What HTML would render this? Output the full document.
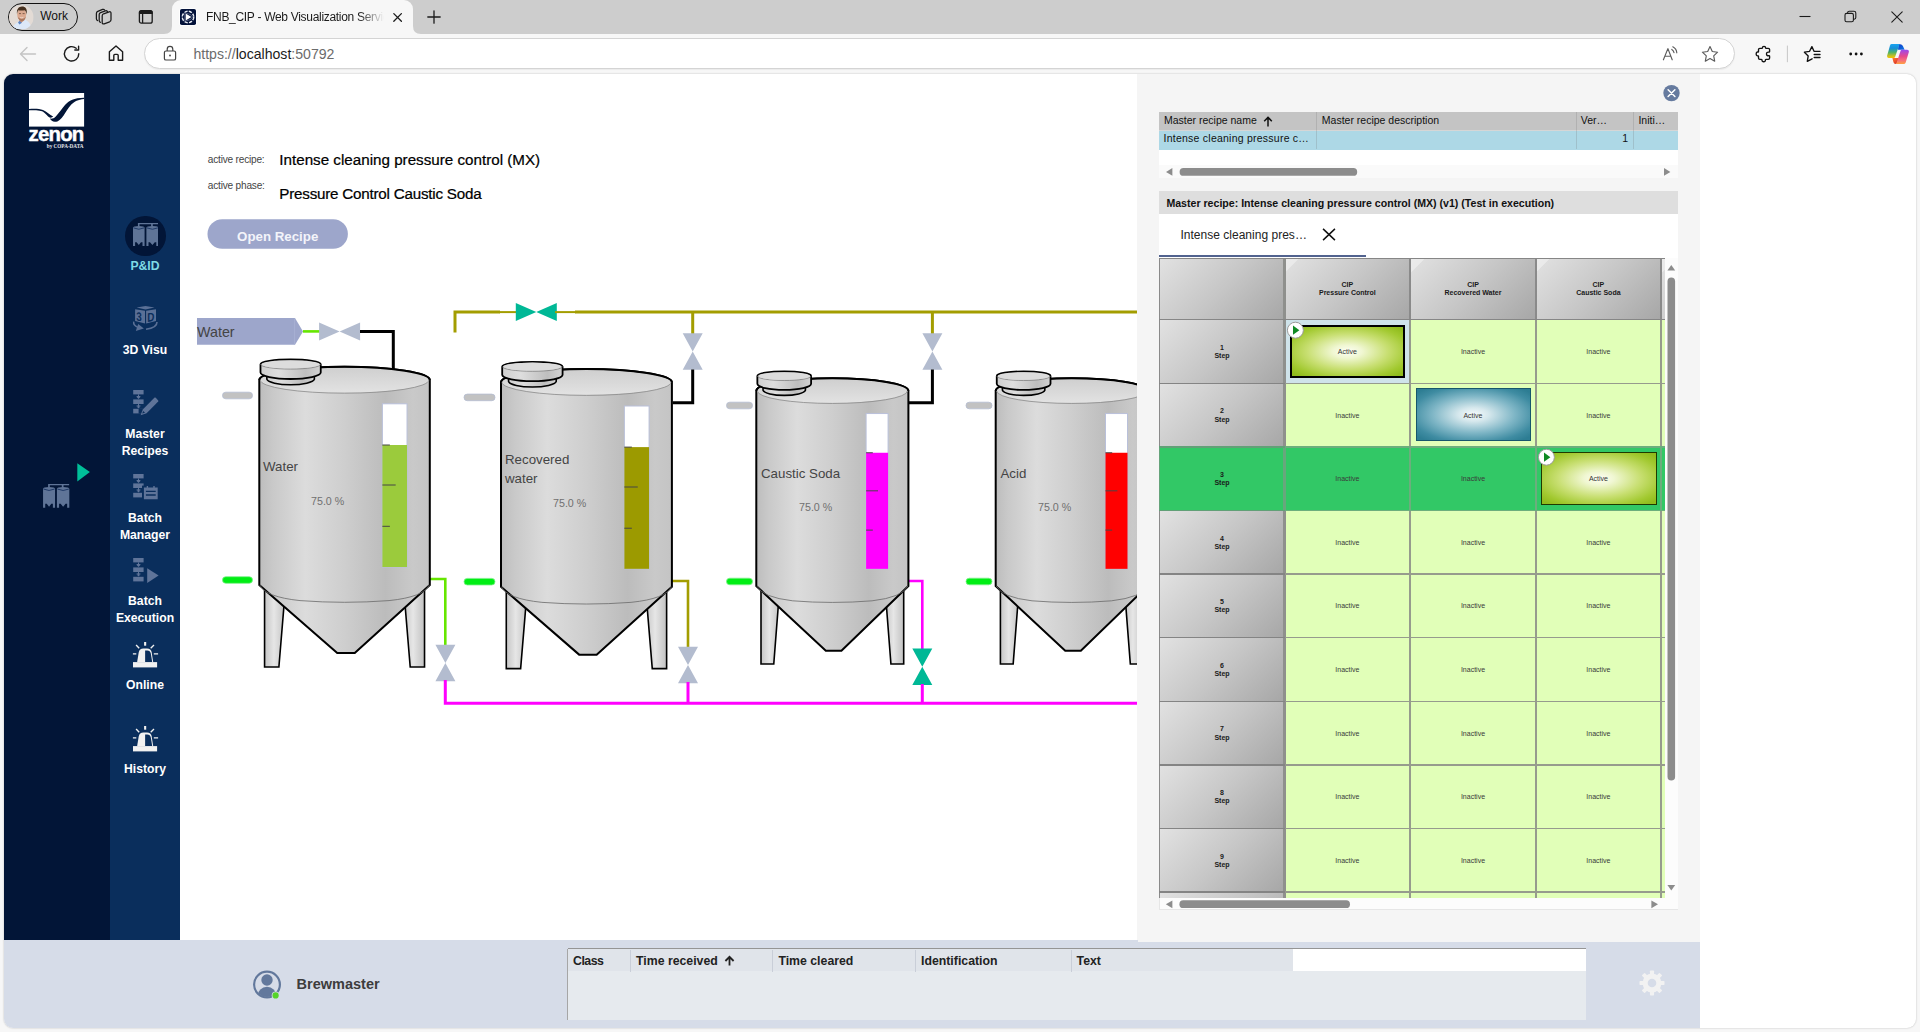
<!DOCTYPE html>
<html lang="en">
<head>
<meta charset="utf-8">
<title>FNB_CIP - Web Visualization Service</title>
<style>
html,body{margin:0;padding:0}
body{width:1920px;height:1032px;position:relative;overflow:hidden;background:#f7f7f7;font-family:"Liberation Sans",sans-serif;color:#1b1b1b}
.abs{position:absolute}
.t{position:absolute;white-space:nowrap;line-height:1}
#tabbar{position:absolute;left:0;top:0;width:1920px;height:34px;background:#cdcdcd}
#toolbar{position:absolute;left:0;top:34px;width:1920px;height:40px;background:#f7f7f7}
#page{position:absolute;left:4px;top:74px;width:1912px;height:954px;border-radius:9px;overflow:hidden;background:#fff;box-shadow:0 0 2px rgba(0,0,0,.25)}
#pg{position:absolute;left:-4px;top:-74px;width:1920px;height:1032px}
.nav{position:absolute;left:110px;width:70px;text-align:center;color:#fff;font-weight:bold;font-size:12.2px;line-height:17.3px}
.gl{position:absolute;background:#8d8d8d}
.hc{position:absolute;background:linear-gradient(135deg,#e2e2e2 0%,#c6c6c6 50%,#a6a6a6 100%)}
.ht{position:absolute;text-align:center;font-size:7px;font-weight:bold;line-height:8.2px;color:#1a1a1a;white-space:nowrap}
.ic{position:absolute;text-align:center;font-size:7px;color:#3a3a3a;white-space:nowrap;line-height:8px}
</style>
</head>
<body>
<div id="tabbar">
  <!-- profile pill -->
  <div class="abs" style="left:8px;top:2.9px;width:70px;height:27.7px;border:1.6px solid #111;border-radius:15px;box-sizing:border-box"></div>
  <svg class="abs" style="left:9.2px;top:4.8px" width="24.6" height="24.6" viewBox="0 0 24.6 24.6">
    <defs><clipPath id="avc"><circle cx="12.3" cy="12.3" r="12.3"/></clipPath></defs>
    <g clip-path="url(#avc)">
      <rect width="24.6" height="24.6" fill="#e3dbd5"/>
      <path d="M3 24.6 C4 19.6 7.6 17.6 10.4 16.4 L15.4 14.6 C19 16 22 18.6 22.6 24.6Z" fill="#dce8f8"/>
      <path d="M9 17.4 L11.2 15 L13 17.8 L10.4 19.6Z" fill="#5f86c4"/>
      <path d="M10.6 14 L15 13 L15.6 15 L12.6 17.6 L10.2 15.6Z" fill="#c48f76"/>
      <ellipse cx="12.7" cy="9.4" rx="4.5" ry="5.9" fill="#dba98f"/>
      <path d="M8.6 11.4 C9.4 14.8 11.4 16 12.9 16 C14.6 16 16.4 14.6 16.9 11.4 C15.6 13.4 14 13.8 12.8 13.8 C11.4 13.8 9.8 13.2 8.6 11.4Z" fill="#a9775e"/>
      <path d="M8 9.2 C7.4 4 9.8 1.6 13 1.5 C16.6 1.5 18.6 4 17.6 9.4 C17.2 7 16.4 5.6 15.6 5.2 C13.6 5.8 10.6 5.6 9.4 5.2 C8.6 6 8.2 7.6 8 9.2Z" fill="#47311f"/>
      <path d="M10 8.6 h2 M13.6 8.6 h2" stroke="#5a3c2c" stroke-width="0.7"/>
      <path d="M11.2 12.4 Q12.8 13.3 14.4 12.4" stroke="#f4e6e0" stroke-width="0.7" fill="none"/>
    </g>
  </svg>
  <div class="t" style="left:40.2px;top:10.4px;font-size:12px;color:#111">Work</div>
  <!-- workspaces icon -->
  <svg class="abs" style="left:94px;top:7px" width="22" height="20" viewBox="0 0 22 20" fill="none" stroke="#1b1b1b" stroke-width="1.25" stroke-linejoin="round" stroke-linecap="round">
    <path d="M3.6 13.6 Q2.4 13.2 2.4 11.8 V6.4 Q2.4 5 3.8 4.4 L8.6 2.4 Q10 2 10.6 3"/>
    <path d="M6.4 15.4 Q5.2 15 5.2 13.6 V7.6 Q5.2 6.2 6.6 5.6 L11.4 3.8 Q12.8 3.4 13.4 4.6"/>
    <path d="M9.6 6.8 L15.2 4.8 Q17 4.4 17 6.2 V12.8 Q17 14.2 15.6 14.8 L10.2 16.8 Q8.2 17.4 8.2 15.4 V8.8 Q8.2 7.4 9.6 6.8Z"/>
  </svg>
  <!-- tab actions icon -->
  <svg class="abs" style="left:138px;top:9px" width="16" height="16" viewBox="0 0 16 16" fill="none" stroke="#1b1b1b" stroke-width="1.3">
    <rect x="1.4" y="1.6" width="12.8" height="12.6" rx="2"/>
    <path d="M1.6 4.4 H14 V3.2 Q14 1.8 12.4 1.8 H3.2 Q1.6 1.8 1.6 3.2Z" fill="#1b1b1b"/>
    <path d="M4.6 4.4 V14"/>
  </svg>
  <!-- active tab -->
  <div class="abs" style="left:172px;top:0;width:241px;height:34px;background:#f7f7f7;border-radius:9px 9px 0 0"></div>
  <svg class="abs" style="left:164px;top:26px" width="8" height="8"><path d="M8 0 V8 H0 Q8 8 8 0Z" fill="#f7f7f7"/></svg>
  <svg class="abs" style="left:413px;top:26px" width="8" height="8"><path d="M0 0 V8 H8 Q0 8 0 0Z" fill="#f7f7f7"/></svg>
  <!-- favicon -->
  <svg class="abs" style="left:179px;top:8px" width="18" height="18" viewBox="0 0 18 18">
    <rect x="0.2" y="0.2" width="17.6" height="17.6" rx="2.6" fill="#fff"/>
    <rect x="1" y="1" width="16" height="16" rx="1.8" fill="#03123a"/>
    <circle cx="9" cy="9" r="5.7" fill="none" stroke="#e8ebf2" stroke-width="1.5" stroke-dasharray="3.2 1.3"/>
    <circle cx="9" cy="9" r="4.6" fill="#03123a"/>
    <path d="M6.7 5.5 L12.4 9 L6.7 12.5Z" fill="#fff"/>
    <path d="M5.8 4.6 V13.4 M5.8 4.6 L11.6 6.6 M5.8 13.4 L11.6 11.4 M11.6 6.6 L13.6 9 L11.6 11.4" stroke="#7f8aa8" stroke-width="0.6" fill="none"/>
  </svg>
  <div class="t" style="left:206px;top:8px;height:20px;line-height:18px;font-size:12px;letter-spacing:-0.3px;color:#1b1b1b;width:178px;overflow:hidden;-webkit-mask-image:linear-gradient(90deg,#000 86%,transparent 100%)">FNB_CIP - Web Visualization Servic</div>
  <svg class="abs" style="left:392px;top:12px" width="11" height="11" viewBox="0 0 11 11" stroke="#1b1b1b" stroke-width="1.3" stroke-linecap="round"><path d="M1.8 1.6 L9.4 9.2 M9.4 1.6 L1.8 9.2"/></svg>
  <svg class="abs" style="left:427px;top:10px" width="14" height="14" viewBox="0 0 14 14" stroke="#1b1b1b" stroke-width="1.3" stroke-linecap="round"><path d="M7 0.8 V13.2 M0.8 7 H13.2"/></svg>
  <!-- window controls -->
  <svg class="abs" style="left:1799px;top:11px" width="12" height="12" viewBox="0 0 12 12" stroke="#1b1b1b" stroke-width="1.1"><path d="M0.5 5.5 H11.5"/></svg>
  <svg class="abs" style="left:1844px;top:10px" width="13" height="13" viewBox="0 0 13 13" fill="none" stroke="#1b1b1b" stroke-width="1.1"><rect x="1" y="3.4" width="8.4" height="8.4" rx="1.6"/><path d="M3.6 3.2 V2.8 Q3.6 1.2 5.2 1.2 H10 Q11.8 1.2 11.8 3 V7.6 Q11.8 9.2 10.2 9.2 H9.6"/></svg>
  <svg class="abs" style="left:1891px;top:11px" width="12" height="12" viewBox="0 0 12 12" stroke="#1b1b1b" stroke-width="1.1" stroke-linecap="round"><path d="M0.8 0.8 L11.2 11.2 M11.2 0.8 L0.8 11.2"/></svg>
</div>
<div id="toolbar">
  <!-- back (disabled) -->
  <svg class="abs" style="left:19px;top:12px" width="18" height="16" viewBox="0 0 18 16" fill="none" stroke="#c4c4c4" stroke-width="1.4" stroke-linecap="round" stroke-linejoin="round"><path d="M16.5 8 H1.5 M8 1.5 L1.5 8 L8 14.5"/></svg>
  <!-- refresh -->
  <svg class="abs" style="left:62px;top:10px" width="20" height="20" viewBox="0 0 20 20" fill="none" stroke="#1b1b1b" stroke-width="1.4" stroke-linecap="round" stroke-linejoin="round"><path d="M16.8 9.8 A7.2 7.2 0 1 1 14.2 4.3"/><path d="M16.6 2.2 V6 H12.8"/></svg>
  <!-- home -->
  <svg class="abs" style="left:107px;top:10px" width="18" height="18" viewBox="0 0 18 18" fill="none" stroke="#1b1b1b" stroke-width="1.4" stroke-linejoin="round"><path d="M2.4 16.2 V7.8 L9 2 L15.6 7.8 V16.2 H11.2 V11.4 Q11.2 10.4 10.2 10.4 H7.8 Q6.8 10.4 6.8 11.4 V16.2Z"/></svg>
  <!-- url pill -->
  <div class="abs" style="left:144px;top:4px;width:1591px;height:31.4px;border:1px solid #d4d4d4;border-radius:16px;background:#fff;box-sizing:border-box;box-shadow:0 1px 1px rgba(0,0,0,.05)"></div>
  <svg class="abs" style="left:163px;top:11px" width="14" height="16" viewBox="0 0 14 16" fill="none" stroke="#444" stroke-width="1.2"><rect x="1.4" y="6" width="11.2" height="9" rx="1.6"/><path d="M4.2 6 V4.2 A2.8 2.8 0 0 1 9.8 4.2 V6"/><circle cx="7" cy="10.5" r="0.9" fill="#444" stroke="none"/></svg>
  <div class="t" style="left:193.4px;top:13px;font-size:14.1px;color:#6b6b6b"><span>https://</span><span style="color:#1b1b1b">localhost</span><span>:50792</span></div>
  <!-- read aloud -->
  <svg class="abs" style="left:1661px;top:10px" width="20" height="20" viewBox="0 0 20 20" fill="none" stroke="#5c5c5c" stroke-width="1.15" stroke-linecap="round" stroke-linejoin="round"><path d="M2.4 15.8 L6.9 4.6 L11.2 15.8 M3.9 12.2 H9.8"/><path d="M10.8 5.4 Q12.6 6.4 13 8.6 M11.8 2.8 Q15.4 4.6 15.8 8.8"/></svg>
  <!-- star -->
  <svg class="abs" style="left:1700px;top:10px" width="20" height="20" viewBox="0 0 20 20" fill="none" stroke="#5c5c5c" stroke-width="1.15" stroke-linejoin="round"><path d="M10 2.6 L12.3 7.5 L17.6 8.2 L13.7 11.9 L14.7 17.2 L10 14.6 L5.3 17.2 L6.3 11.9 L2.4 8.2 L7.7 7.5Z"/></svg>
  <!-- extensions + favorites -->
  <svg class="abs" style="left:1748px;top:6px" width="82" height="30" viewBox="0 0 82 30" fill="none" stroke="#111" stroke-width="1.35" stroke-linejoin="round" stroke-linecap="round">
    <path d="M10.5 9.6 Q10.5 8.3 11.8 8.3 H14 Q14.6 8.3 14.5 7.7 Q14.4 6.3 16 6.3 Q17.6 6.3 17.5 7.7 Q17.4 8.3 18 8.3 H20.3 Q21.6 8.3 21.6 9.6 V11.4 Q21.6 12.2 20.8 12.1 Q18.5 11.9 18.5 13.9 Q18.5 15.9 20.8 15.7 Q21.6 15.6 21.6 16.4 V18.1 Q21.6 19.4 20.3 19.4 H18 Q17.3 19.4 17.4 20.1 Q17.5 21.7 15.7 21.7 Q13.9 21.7 14 20.1 Q14.1 19.4 13.4 19.4 H11.8 Q10.5 19.4 10.5 18.1 V16.4 Q10.5 15.7 9.8 15.8 Q8.2 15.9 8.2 13.9 Q8.2 11.9 9.8 12 Q10.5 12.1 10.5 11.4Z"/>
    <path d="M39.4 6 V21.8" stroke="#c6c6c6" stroke-width="1"/>
    <path d="M66 11.3 L63.9 6.6 L61.6 11.3 L56.4 12.2 L60.2 15.9 L59.3 21.4 L64.1 18.8 M66 11.3 H72 M66.2 14.5 H72 M66.2 17.5 H72"/>
  </svg>
  <!-- more -->
  <svg class="abs" style="left:1847px;top:18px" width="18" height="4" viewBox="0 0 18 4" fill="#111"><circle cx="3.7" cy="2" r="1.4"/><circle cx="9.1" cy="2" r="1.4"/><circle cx="14.4" cy="2" r="1.4"/></svg>
  <!-- copilot -->
  <svg class="abs" style="left:1880px;top:6px" width="32" height="32" viewBox="0 0 32 32">
    <defs>
      <linearGradient id="cp1" x1="0" y1="0" x2="0" y2="1"><stop offset="0" stop-color="#1aa4f0"/><stop offset="0.3" stop-color="#1690d8"/><stop offset="0.6" stop-color="#4fb367"/><stop offset="0.85" stop-color="#c8c020"/><stop offset="1" stop-color="#f5c400"/></linearGradient>
      <linearGradient id="cp2" x1="0" y1="0" x2="0" y2="1"><stop offset="0" stop-color="#9a48ee"/><stop offset="0.45" stop-color="#e6488e"/><stop offset="0.75" stop-color="#f7707a"/><stop offset="1" stop-color="#ffa23e"/></linearGradient>
      <linearGradient id="cp3" x1="0" y1="0" x2="1" y2="1"><stop offset="0" stop-color="#1238c6"/><stop offset="1" stop-color="#0b7ce6"/></linearGradient>
      <linearGradient id="cp4" x1="0" y1="0" x2="0.6" y2="1"><stop offset="0" stop-color="#ff7a30"/><stop offset="1" stop-color="#dc3428"/></linearGradient>
    </defs>
    <path d="M18.6 4 Q22 4 22.8 5.8 L24.6 9.8 H18 Z" fill="url(#cp3)"/>
    <path d="M12.4 18 H19 L17 23.2 Q16.6 24 15.6 24 Q13.8 23.8 13.4 22Z" fill="url(#cp4)"/>
    <path d="M11.6 4 H19.6 L15 17.2 Q14.6 18 13.6 18 H8.6 Q6.6 17.8 7.1 15.8 L10 5.4 Q10.4 4 11.6 4Z" fill="url(#cp1)"/>
    <path d="M21.6 9.8 H27 Q29.4 10 28.8 12.2 L25.7 22.4 Q25.2 24 23.6 24 H16.2 L20.6 10.8 Q20.9 9.8 21.6 9.8Z" fill="url(#cp2)"/>
  </svg>
</div>
<div id="page"><div id="pg">
<!-- sidebar -->
<div class="abs" style="left:0;top:74px;width:110px;height:866px;background:#021537"></div>
<div class="abs" style="left:109.8px;top:74px;width:70.7px;height:866px;background:#0a2e5c"></div>
<!-- logo -->
<svg class="abs" style="left:29px;top:92.8px" width="56" height="34" viewBox="0 0 56 34">
  <rect width="55.1" height="33.6" fill="#fff"/>
  <path d="M0 16 C6 15.6 10.5 15.8 14 17 C18 18.6 20.5 21.8 24.2 23.4 C22.8 24.4 21.6 24.8 20.6 24.6 C18.5 23 17 21 15 19.4 C12.5 17.6 9 17.2 0 17.3Z" fill="#021537"/>
  <path d="M20.9 25.6 C23 26 25 25.4 27 23.2 C30 20 33 15.5 36 12 C40 7.6 45 5 55.1 4.8 L55.1 5.9 C49 6.4 45.5 8.4 42.3 11.4 C39 15 37 19 34.6 22.4 C32 26 29.5 28.8 25.8 28.8 C23.6 28.8 21.8 27.2 20.9 25.6Z" fill="#021537"/>
</svg>
<div class="t" style="left:28.6px;top:123.8px;font-size:20.4px;font-weight:bold;color:#fff;letter-spacing:-0.8px;line-height:20.4px;-webkit-text-stroke:0.45px #fff">zenon</div>
<div class="t" style="left:46.8px;top:144.2px;font-size:5.2px;color:#e4e6ea;font-family:'Liberation Serif',serif;font-weight:bold">by COPA-DATA</div>
<!-- col1 items -->
<svg class="abs" style="left:77px;top:463px" width="14" height="19" viewBox="0 0 14 19"><path d="M0.3 0.3 L12.9 9 L0.3 18.6Z" fill="#00bf99"/></svg>
<svg class="abs" style="left:43.3px;top:483.9px" width="27" height="24" viewBox="0 0 26 23.2"><use href="#tanks" fill="#5f7497"/></svg>
<!-- nav col2 -->
<div class="abs" style="left:125.3px;top:215.5px;width:40.4px;height:40.4px;border-radius:50%;background:#021537"></div>
<svg width="0" height="0" style="position:absolute"><defs>
  <g id="tanks">
    <path d="M4.9 0 H25.2 V1.2 H19.8 V3.4 H18.1 V1.2 H6.5 V3.4 H4.9Z"/>
    <path d="M0 4.8 Q0 2.9 5.8 2.9 Q11.6 2.9 11.6 4.8 V23 H9.5 V19.2 H8 L5.8 21.9 L3.6 19.2 H2.1 V23 H0Z"/>
    <path d="M13.4 4.8 Q13.4 2.9 19.4 2.9 Q25.4 2.9 25.4 4.8 V23 H23.3 V19.2 H21.8 L19.4 21.9 L17 19.2 H15.5 V23 H13.4Z"/>
    <path d="M0.5 4.9 Q5.8 7.6 11.1 4.9 M13.9 4.9 Q19.4 7.6 24.9 4.9" fill="none" stroke="#1a3462" stroke-width="0.9"/>
  </g>
  <g id="flow3">
    <rect x="0.2" y="0" width="10.4" height="4.4"/><rect x="0.2" y="9.4" width="10.4" height="4.6"/><rect x="0.2" y="18.8" width="10.4" height="4.6"/>
    <path d="M5 4.4 H6 V7 H7.4 L5.5 9 L3.6 7 H5Z"/><path d="M5 14 H6 V16.4 H7.4 L5.5 18.4 L3.6 16.4 H5Z"/>
    <rect x="3.6" y="6" width="3.8" height="1"/><rect x="3.6" y="15.4" width="3.8" height="1"/>
  </g>
  <g id="beacon">
    <rect x="0" y="20.1" width="24.1" height="5.3"/>
    <path d="M4.1 20.3 L5.7 10.4 Q6.4 6.4 10.4 6.4 H14 Q18 6.4 18.7 10.4 L20.2 20.3Z"/>
    <path d="M12.1 8.4 H14.2 Q17.2 8.4 17.8 11.6 L19.2 20.1 H12.1Z" fill="#0a2e5c"/>
    <rect x="11.1" y="0" width="2.1" height="3.7"/>
    <path d="M3.1 3.1 L6.2 6.2 M21 3.1 L17.7 6.2 M-0.1 11.9 H3.3 M20.8 11.9 H25.1" stroke="#f1f1f1" stroke-width="1.4" fill="none"/>
  </g>
</defs></svg>
<svg class="abs" style="left:132.5px;top:223.1px" width="25.4" height="23.2" viewBox="0 0 25.4 23.2" fill="#5f7497"><use href="#tanks"/></svg>
<div class="nav" style="top:258.0px;color:#7fdbe6">P&amp;ID</div>
<!-- 3D visu icon -->
<svg class="abs" style="left:130px;top:300px" width="32" height="34" viewBox="0 0 32 34" fill="#5a7096">
  <path d="M6.6 7.5 L15.5 5.9 L24.5 7.5 L15.5 9.4Z"/>
  <path d="M5.1 9.2 L15 10.8 V23.6 L5.1 20.9Z"/>
  <path d="M16.1 10.8 L26 9.2 V20.9 L16.1 23.6Z"/>
  <text transform="translate(6.3,20.5) skewY(9) scale(0.8,1)" font-family="Liberation Sans, sans-serif" font-size="12.4" font-weight="bold" fill="#0a2e5c">3</text>
  <text transform="translate(17.3,22.1) skewY(-9) scale(0.8,1)" font-family="Liberation Sans, sans-serif" font-size="12.4" font-weight="bold" fill="#0a2e5c">D</text>
  <path d="M3.7 21.7 Q3 25.5 8.8 27.9" fill="none" stroke="#5a7096" stroke-width="1.5"/>
  <path d="M8.2 24.1 L13.8 28.5 L5.8 31.1Z"/>
  <path d="M27 22.1 Q27 28.1 16 29.3" fill="none" stroke="#5a7096" stroke-width="1.6"/>
</svg>
<div class="nav" style="top:341.5px">3D Visu</div>
<!-- master recipes icon -->
<svg class="abs" style="left:132.5px;top:390px" width="27" height="26" viewBox="0 0 27 26" fill="#5f7499">
  <use href="#flow3"/>
  <rect x="5.6" y="18.6" width="6" height="5" fill="#0a2e5c"/>
  <path d="M7.6 25.2 L9.8 19.4 L21.6 7.6 Q22.2 7.2 22.8 7.8 L25.2 10.4 Q25.6 11 25.2 11.6 L13.6 23.2Z"/>
  <path d="M9.2 23.6 L10.2 21 L12 22.8Z" fill="#0a2e5c"/>
</svg>
<div class="nav" style="top:425.5px">Master<br>Recipes</div>
<!-- batch manager icon -->
<svg class="abs" style="left:132.5px;top:473.5px" width="27" height="26" viewBox="0 0 27 26" fill="#5f7499">
  <use href="#flow3"/>
  <rect x="9" y="11.6" width="18" height="15" fill="#0a2e5c"/>
  <path transform="translate(-0.7,0.3)" d="M11.6 13.2 H14.4 V11.8 H15.8 V13.2 H21 V11.8 H22.4 V13.2 H25.4 V25 H11.6Z M13.6 16.4 V17.8 H23.4 V16.4Z M13.6 20 V21.4 H23.4 V20Z" fill-rule="evenodd"/>
</svg>
<div class="nav" style="top:509.5px">Batch<br>Manager</div>
<!-- batch execution icon -->
<svg class="abs" style="left:132.5px;top:558px" width="27" height="26" viewBox="0 0 27 26" fill="#5f7499">
  <use href="#flow3"/>
  <path d="M14.2 10.2 L25.6 17.6 L14.2 25Z"/>
</svg>
<div class="nav" style="top:592.5px">Batch<br>Execution</div>
<!-- online -->
<svg class="abs" style="left:132.9px;top:641.6px;overflow:visible" width="26" height="26" viewBox="0 0 26 26" fill="#f1f1f1"><use href="#beacon"/></svg>
<div class="nav" style="top:676.5px">Online</div>
<svg class="abs" style="left:132.9px;top:725.6px;overflow:visible" width="26" height="26" viewBox="0 0 26 26" fill="#f1f1f1"><use href="#beacon"/></svg>
<div class="nav" style="top:760.5px">History</div>
<!-- P&ID -->
<svg class="abs" style="left:0;top:0" width="1138" height="1032" viewBox="0 0 1138 1032" font-family="Liberation Sans, sans-serif">
<defs>
<linearGradient id="tg" x1="0" y1="0" x2="1" y2="0">
<stop offset="0" stop-color="#bdbdbd"/><stop offset="0.08" stop-color="#c9c9c9"/><stop offset="0.27" stop-color="#dcdcdc"/><stop offset="0.5" stop-color="#cecece"/><stop offset="0.74" stop-color="#bcbcbc"/><stop offset="0.9" stop-color="#c9c9c9"/><stop offset="1" stop-color="#c4c4c4"/>
</linearGradient>
<linearGradient id="tt" x1="0" y1="0" x2="0" y2="1">
<stop offset="0" stop-color="#cfcfcf"/><stop offset="1" stop-color="#e2e2e2"/>
</linearGradient>
<linearGradient id="lg" x1="0" y1="0" x2="1" y2="0">
<stop offset="0" stop-color="#c6c6c6"/><stop offset="0.45" stop-color="#e6e6e6"/><stop offset="1" stop-color="#c2c2c2"/>
</linearGradient>
<linearGradient id="lidg" x1="0" y1="0" x2="1" y2="0">
<stop offset="0" stop-color="#cfcfcf"/><stop offset="0.3" stop-color="#dedede"/><stop offset="0.75" stop-color="#bebebe"/><stop offset="1" stop-color="#d2d2d2"/>
</linearGradient>
</defs>
<text x="207.8" y="162.8" font-size="10.1" fill="#444" letter-spacing="-0.2">active recipe:</text>
<text x="279.3" y="164.7" font-size="15.2" fill="#000" stroke="#000" stroke-width="0.22">Intense cleaning pressure control (MX)</text>
<text x="207.8" y="188.9" font-size="10.1" fill="#444" letter-spacing="-0.2">active phase:</text>
<text x="279.3" y="198.7" font-size="15.2" fill="#000" stroke="#000" stroke-width="0.22" letter-spacing="-0.22">Pressure Control Caustic Soda</text>
<rect x="207.5" y="219.2" width="140.4" height="29.6" rx="14.8" fill="#9da6cb"/>
<text x="277.7" y="240.8" font-size="13.3" font-weight="bold" fill="#f3f4fa" text-anchor="middle">Open Recipe</text>
<path d="M197 318 H295 L303 331.4 L295 344.8 H197Z" fill="#9da6cb"/>
<path d="M294.6 318.4 V344.4" stroke="#aab2d4" stroke-width="0.8"/>
<text x="197" y="337" font-size="14.3" fill="#444">Water</text>
<path d="M303 331.4 H320" fill="none" stroke="#66e600" stroke-width="2.6" stroke-linejoin="miter"/>
<path d="M319.1 322.6 L339.6 331.5 L319.1 340.4Z M360.1 322.6 L339.6 331.5 L360.1 340.4Z" fill="#b3bccf"/>
<path d="M360 331.4 H393.3 V369" fill="none" stroke="#000" stroke-width="3" stroke-linejoin="miter"/>
<path d="M455 332.4 V312.1 H500" fill="none" stroke="#a39d00" stroke-width="3" stroke-linejoin="miter"/>
<path d="M499 312.1 H518" fill="none" stroke="#a39d00" stroke-width="2" stroke-linejoin="miter"/>
<path d="M515.8 303.1 L536.3 312 L515.8 320.9Z M556.8 303.1 L536.3 312 L556.8 320.9Z" fill="#00b896"/>
<path d="M555 312.1 H576" fill="none" stroke="#a39d00" stroke-width="2" stroke-linejoin="miter"/>
<path d="M575 312.1 H1140" fill="none" stroke="#a39d00" stroke-width="3" stroke-linejoin="miter"/>
<path d="M692.7 312 V334" fill="none" stroke="#a39d00" stroke-width="3" stroke-linejoin="miter"/>
<path d="M682.7 333.3 L692.7 351.5 L702.7 333.3Z M682.7 369.7 L692.7 351.5 L702.7 369.7Z" fill="#b3bccf"/>
<path d="M692.7 369.5 V402.8 H672.6" fill="none" stroke="#000" stroke-width="3" stroke-linejoin="miter"/>
<path d="M932.4 312 V334" fill="none" stroke="#a39d00" stroke-width="3" stroke-linejoin="miter"/>
<path d="M922.4 333.3 L932.4 351.5 L942.4 333.3Z M922.4 369.7 L932.4 351.5 L942.4 369.7Z" fill="#b3bccf"/>
<path d="M932.4 369.5 V402.8 H908.5" fill="none" stroke="#000" stroke-width="3" stroke-linejoin="miter"/>
<path d="M430 579 H445.3 V646" fill="none" stroke="#66e600" stroke-width="2.6" stroke-linejoin="miter"/>
<path d="M435.4 644.8 L445.4 663 L455.4 644.8Z M435.4 681.2 L445.4 663 L455.4 681.2Z" fill="#b3bccf"/>
<path d="M672 581 H688 V648" fill="none" stroke="#a39d00" stroke-width="2.6" stroke-linejoin="miter"/>
<path d="M678 646.8 L688 665 L698 646.8Z M678 683.2 L688 665 L698 683.2Z" fill="#b3bccf"/>
<path d="M908 581 H922.3 V649" fill="none" stroke="#ff00ff" stroke-width="2.6" stroke-linejoin="miter"/>
<path d="M912.3 648.5 L922.3 666.7 L932.3 648.5Z M912.3 684.9000000000001 L922.3 666.7 L932.3 684.9000000000001Z" fill="#00b896"/>
<path d="M445.3 680 V703.3 H1140" fill="none" stroke="#ff00ff" stroke-width="3" stroke-linejoin="miter"/>
<path d="M688 682 V703" fill="none" stroke="#ff00ff" stroke-width="3" stroke-linejoin="miter"/>
<path d="M922.3 684 V703" fill="none" stroke="#ff00ff" stroke-width="3" stroke-linejoin="miter"/>
<rect x="222.5" y="392.2" width="30.0" height="6.6" rx="3.3" fill="#c2c2c2" stroke="#b4bcd2" stroke-width="0.8"/>
<rect x="222.5" y="576.7" width="30.0" height="6.6" rx="3.3" fill="#00ee14" stroke="#7df08a" stroke-width="0.8"/>
<rect x="464" y="394.09999999999997" width="31" height="6.6" rx="3.3" fill="#c2c2c2" stroke="#b4bcd2" stroke-width="0.8"/>
<rect x="464" y="578.4000000000001" width="31" height="6.6" rx="3.3" fill="#00ee14" stroke="#7df08a" stroke-width="0.8"/>
<rect x="726.5" y="402.2" width="26.0" height="6.6" rx="3.3" fill="#c2c2c2" stroke="#b4bcd2" stroke-width="0.8"/>
<rect x="726.5" y="578.2" width="26.0" height="6.6" rx="3.3" fill="#00ee14" stroke="#7df08a" stroke-width="0.8"/>
<rect x="966" y="402.2" width="26" height="6.6" rx="3.3" fill="#c2c2c2" stroke="#b4bcd2" stroke-width="0.8"/>
<rect x="966" y="578.2" width="26" height="6.6" rx="3.3" fill="#00ee14" stroke="#7df08a" stroke-width="0.8"/>
<path d="M264.57 588.0 L285.45 588.0 L278.89 667.0 L264.57 667.0Z" fill="url(#lg)" stroke="#000" stroke-width="1.6" stroke-linejoin="miter"/>
<path d="M424.53 588.0 L403.65 588.0 L410.21 667.0 L424.53 667.0Z" fill="url(#lg)" stroke="#000" stroke-width="1.6"/>
<path d="M259.3 380.0 A85.25 13.2 0 0 1 429.8 380.0 L429.8 585.0 L354.74 653.0 L337.24 653.0 L259.3 585.0Z" fill="url(#tg)" stroke="#000" stroke-width="2" stroke-linejoin="miter"/>
<ellipse cx="344.55" cy="380.0" rx="84.25" ry="12.6" fill="url(#tt)"/>
<path d="M260.3 380.0 A84.25 13.2 0 0 0 428.8 380.0" fill="none" stroke="#8a8a8a" stroke-width="0.8"/>
<path d="M259.8 585.0 Q265.3 597.0 300.06 600.6 Q344.55 604.0 389.04 600.6 Q423.8 597.0 429.3 585.0" fill="none" stroke="#6a6a6a" stroke-width="0.8"/>
<path d="M259.3 380.0 A85.25 13.2 0 0 1 429.8 380.0" fill="none" stroke="#000" stroke-width="2"/>
<path d="M266.86 373.0 L266.86 379.3 A23.860058309037903 6.0 0 0 0 314.38 379.3 L314.38 373.0Z" fill="url(#lidg)" stroke="#000" stroke-width="1.6"/>
<path d="M260.49 364.3 A30.123323615160352 4.8 0 0 1 320.74 364.3 L320.74 372.6 A30.123323615160352 6.4 0 0 1 260.49 372.6Z" fill="url(#lidg)" stroke="#000" stroke-width="1.8"/>
<path d="M260.49 364.3 A30.123323615160352 4.8 0 0 0 320.74 364.3" fill="none" stroke="#777" stroke-width="0.7"/>
<ellipse cx="290.62" cy="364.3" rx="29.123323615160352" ry="4.0" fill="#dcdcdc"/>
<rect x="382.38" y="403.8" width="24.65" height="163.2" fill="#fff" stroke="#b9c0da" stroke-width="1"/>
<rect x="382.38" y="445.0" width="24.65" height="122.0" fill="#9bcb3c"/>
<path d="M382.38 445.0 h7.5" stroke="#474747" stroke-width="1"/>
<path d="M382.38 485.0 h13.3" stroke="#474747" stroke-width="1"/>
<path d="M382.38 526.3 h7.5" stroke="#474747" stroke-width="1"/>
<text x="263" y="471" font-size="13.3" fill="#444">Water</text>
<text x="311" y="505" font-size="10.7" fill="#707070">75.0 %</text>
<path d="M506.28 589.78 L527.21 589.78 L520.63 668.6 L506.28 668.6Z" fill="url(#lg)" stroke="#000" stroke-width="1.6" stroke-linejoin="miter"/>
<path d="M666.62 589.78 L645.69 589.78 L652.27 668.6 L666.62 668.6Z" fill="url(#lg)" stroke="#000" stroke-width="1.6"/>
<path d="M501 382.25 A85.44999999999999 13.169951219512196 0 0 1 671.9 382.25 L671.9 586.79 L596.66 654.63 L579.13 654.63 L501 586.79Z" fill="url(#tg)" stroke="#000" stroke-width="2" stroke-linejoin="miter"/>
<ellipse cx="586.45" cy="382.25" rx="84.44999999999999" ry="12.569951219512197" fill="url(#tt)"/>
<path d="M502 382.25 A84.44999999999999 13.169951219512196 0 0 0 670.9 382.25" fill="none" stroke="#8a8a8a" stroke-width="0.8"/>
<path d="M501.5 586.79 Q507 598.76 541.86 602.35 Q586.45 605.74 631.04 602.35 Q665.9 598.76 671.4 586.79" fill="none" stroke="#6a6a6a" stroke-width="0.8"/>
<path d="M501 382.25 A85.44999999999999 13.169951219512196 0 0 1 671.9 382.25" fill="none" stroke="#000" stroke-width="2"/>
<path d="M508.57 375.27 L508.57 381.55 A23.916034985422737 5.986341463414634 0 0 0 556.21 381.55 L556.21 375.27Z" fill="url(#lidg)" stroke="#000" stroke-width="1.6"/>
<path d="M502.2 366.59 A30.193994169096204 4.789073170731707 0 0 1 562.58 366.59 L562.58 374.87 A30.193994169096204 6.385430894308944 0 0 1 502.2 374.87Z" fill="url(#lidg)" stroke="#000" stroke-width="1.8"/>
<path d="M502.2 366.59 A30.193994169096204 4.789073170731707 0 0 0 562.58 366.59" fill="none" stroke="#777" stroke-width="0.7"/>
<ellipse cx="532.39" cy="366.59" rx="29.193994169096204" ry="3.9890731707317073" fill="#dcdcdc"/>
<rect x="624.37" y="406.0" width="24.71" height="162.83" fill="#fff" stroke="#b9c0da" stroke-width="1"/>
<rect x="624.37" y="447.11" width="24.71" height="121.72" fill="#9c9a00"/>
<path d="M624.37 447.11 h7.5" stroke="#474747" stroke-width="1"/>
<path d="M624.37 487.01 h13.4" stroke="#474747" stroke-width="1"/>
<path d="M624.37 528.22 h7.5" stroke="#474747" stroke-width="1"/>
<text x="505" y="464" font-size="13.3" fill="#444">Recovered</text>
<text x="505" y="483" font-size="13.3" fill="#444">water</text>
<text x="553" y="507" font-size="10.7" fill="#707070">75.0 %</text>
<path d="M761.0 588.83 L779.62 588.83 L773.77 664.0 L761.0 664.0Z" fill="url(#lg)" stroke="#000" stroke-width="1.6" stroke-linejoin="miter"/>
<path d="M903.7 588.83 L885.08 588.83 L890.93 664.0 L903.7 664.0Z" fill="url(#lg)" stroke="#000" stroke-width="1.6"/>
<path d="M756.3 390.91 A76.05000000000001 12.56039024390244 0 0 1 908.4 390.91 L908.4 585.97 L841.44 650.68 L825.83 650.68 L756.3 585.97Z" fill="url(#tg)" stroke="#000" stroke-width="2" stroke-linejoin="miter"/>
<ellipse cx="832.35" cy="390.91" rx="75.05000000000001" ry="11.96039024390244" fill="url(#tt)"/>
<path d="M757.3 390.91 A75.05000000000001 12.56039024390244 0 0 0 907.4 390.91" fill="none" stroke="#8a8a8a" stroke-width="0.8"/>
<path d="M756.8 585.97 Q762.3 597.39 792.66 600.82 Q832.35 604.05 872.04 600.82 Q902.4 597.39 907.9 585.97" fill="none" stroke="#6a6a6a" stroke-width="0.8"/>
<path d="M756.3 390.91 A76.05000000000001 12.56039024390244 0 0 1 908.4 390.91" fill="none" stroke="#000" stroke-width="2"/>
<path d="M763.04 384.25 L763.04 390.24 A21.285131195335282 5.7092682926829275 0 0 0 805.43 390.24 L805.43 384.25Z" fill="url(#lidg)" stroke="#000" stroke-width="1.6"/>
<path d="M757.36 375.97 A26.872478134110793 4.567414634146342 0 0 1 811.11 375.97 L811.11 383.87 A26.872478134110793 6.089886178861789 0 0 1 757.36 383.87Z" fill="url(#lidg)" stroke="#000" stroke-width="1.8"/>
<path d="M757.36 375.97 A26.872478134110793 4.567414634146342 0 0 0 811.11 375.97" fill="none" stroke="#777" stroke-width="0.7"/>
<ellipse cx="784.24" cy="375.97" rx="25.872478134110793" ry="3.767414634146342" fill="#dcdcdc"/>
<rect x="866.1" y="413.55" width="21.99" height="155.3" fill="#fff" stroke="#b9c0da" stroke-width="1"/>
<rect x="866.1" y="452.76" width="21.99" height="116.09" fill="#ff00ff"/>
<path d="M866.1 452.76 h6.7" stroke="#474747" stroke-width="1"/>
<path d="M866.1 490.82 h11.9" stroke="#474747" stroke-width="1"/>
<path d="M866.1 530.12 h6.7" stroke="#474747" stroke-width="1"/>
<text x="761" y="478" font-size="13.3" fill="#444">Caustic Soda</text>
<text x="799" y="511" font-size="10.7" fill="#707070">75.0 %</text>
<path d="M1000.4 588.83 L1019.02 588.83 L1013.17 664.0 L1000.4 664.0Z" fill="url(#lg)" stroke="#000" stroke-width="1.6" stroke-linejoin="miter"/>
<path d="M1143.1 588.83 L1124.48 588.83 L1130.33 664.0 L1143.1 664.0Z" fill="url(#lg)" stroke="#000" stroke-width="1.6"/>
<path d="M995.7 390.91 A76.04999999999995 12.56039024390244 0 0 1 1147.8 390.91 L1147.8 585.97 L1080.84 650.68 L1065.23 650.68 L995.7 585.97Z" fill="url(#tg)" stroke="#000" stroke-width="2" stroke-linejoin="miter"/>
<ellipse cx="1071.75" cy="390.91" rx="75.04999999999995" ry="11.96039024390244" fill="url(#tt)"/>
<path d="M996.7 390.91 A75.04999999999995 12.56039024390244 0 0 0 1146.8 390.91" fill="none" stroke="#8a8a8a" stroke-width="0.8"/>
<path d="M996.2 585.97 Q1001.7 597.39 1032.06 600.82 Q1071.75 604.05 1111.44 600.82 Q1141.8 597.39 1147.3 585.97" fill="none" stroke="#6a6a6a" stroke-width="0.8"/>
<path d="M995.7 390.91 A76.04999999999995 12.56039024390244 0 0 1 1147.8 390.91" fill="none" stroke="#000" stroke-width="2"/>
<path d="M1002.44 384.25 L1002.44 390.24 A21.285131195335264 5.7092682926829275 0 0 0 1044.83 390.24 L1044.83 384.25Z" fill="url(#lidg)" stroke="#000" stroke-width="1.6"/>
<path d="M996.76 375.97 A26.87247813411077 4.567414634146342 0 0 1 1050.51 375.97 L1050.51 383.87 A26.87247813411077 6.089886178861789 0 0 1 996.76 383.87Z" fill="url(#lidg)" stroke="#000" stroke-width="1.8"/>
<path d="M996.76 375.97 A26.87247813411077 4.567414634146342 0 0 0 1050.51 375.97" fill="none" stroke="#777" stroke-width="0.7"/>
<ellipse cx="1023.64" cy="375.97" rx="25.87247813411077" ry="3.767414634146342" fill="#dcdcdc"/>
<rect x="1105.5" y="413.55" width="21.99" height="155.3" fill="#fff" stroke="#b9c0da" stroke-width="1"/>
<rect x="1105.5" y="452.76" width="21.99" height="116.09" fill="#ff0000"/>
<path d="M1105.5 452.76 h6.7" stroke="#474747" stroke-width="1"/>
<path d="M1105.5 490.82 h11.9" stroke="#474747" stroke-width="1"/>
<path d="M1105.5 530.12 h6.7" stroke="#474747" stroke-width="1"/>
<text x="1000.5" y="478" font-size="13.3" fill="#444">Acid</text>
<text x="1038" y="511" font-size="10.7" fill="#707070">75.0 %</text>
</svg>
<!-- right panel -->
<div class="abs" style="left:1137.4px;top:74px;width:562.4px;height:868px;background:#f5f5f5"></div>
<svg class="abs" style="left:1662px;top:84px" width="19" height="19" viewBox="0 0 19 19"><circle cx="9.5" cy="9.1" r="8.2" fill="#667b9f"/><path d="M6.1 5.7 L12.9 12.5 M12.9 5.7 L6.1 12.5" stroke="#fff" stroke-width="1.5" stroke-linecap="round"/></svg>
<div class="abs" style="left:1159px;top:112.3px;width:518.6px;height:18px;background:#c4c4c4"></div>
<div class="abs" style="left:1159px;top:130.5px;width:519.2px;height:19px;background:#add8e6"></div>
<div class="abs" style="left:1159px;top:130px;width:518.6px;height:0.6px;background:#d6d6d6"></div>
<div class="abs" style="left:1159px;top:149.5px;width:519.2px;height:15.2px;background:#fff"></div>
<div class="abs" style="left:1159px;top:164.7px;width:518.6px;height:13.4px;background:#fafafa"></div>
<div class="abs" style="left:1316.4px;top:112.3px;width:1px;height:37.2px;background:rgba(110,110,110,.22)"></div>
<div class="abs" style="left:1576px;top:112.3px;width:1px;height:37.2px;background:rgba(110,110,110,.22)"></div>
<div class="abs" style="left:1633px;top:112.3px;width:1px;height:37.2px;background:rgba(110,110,110,.22)"></div>
<div class="t" style="left:1164px;top:114.8px;font-size:10.5px;color:#111">Master recipe name</div>
<svg class="abs" style="left:1263px;top:115.6px" width="10" height="11" viewBox="0 0 10 11" fill="none" stroke="#111" stroke-width="1.5"><path d="M5 10.4 V1.6 M1.2 5.2 L5 1.4 L8.8 5.2"/></svg>
<div class="t" style="left:1321.8px;top:114.8px;font-size:10.5px;color:#111">Master recipe description</div>
<div class="t" style="left:1580.8px;top:114.8px;font-size:10.5px;color:#111">Ver…</div>
<div class="t" style="left:1638.4px;top:114.8px;font-size:10.5px;color:#111">Initi…</div>
<div class="t" style="left:1163.6px;top:132.9px;font-size:10.5px;color:#111;letter-spacing:0.235px">Intense cleaning pressure c…</div>
<div class="t" style="left:1600px;top:133px;width:28.2px;text-align:right;font-size:10.5px;color:#111">1</div>
<svg class="abs" style="left:1159px;top:164.7px" width="519" height="14" viewBox="0 0 519 14"><path d="M7 6.9 L13.4 3 V10.8Z" fill="#8c8c8c"/><rect x="20.6" y="3" width="177.6" height="7.8" rx="3.9" fill="#8c8c8c"/><path d="M511.4 6.9 L505 3 V10.8Z" fill="#8c8c8c"/></svg>
<div class="abs" style="left:1159px;top:191.2px;width:518.6px;height:23.6px;background:#dedede"></div>
<div class="t" style="left:1166.4px;top:197.6px;font-size:10.6px;font-weight:bold;color:#111">Master recipe: Intense cleaning pressure control (MX) (v1) (Test in execution)</div>
<div class="abs" style="left:1159px;top:214.4px;width:518.6px;height:44px;background:#fff"></div>
<div class="t" style="left:1180.4px;top:229.2px;font-size:12px;color:#222;letter-spacing:0.02px">Intense cleaning pres…</div>
<svg class="abs" style="left:1322px;top:228px" width="14" height="13" viewBox="0 0 14 13" stroke="#111" stroke-width="1.5" stroke-linecap="square"><path d="M1.6 1.4 L12.4 11.6 M12.4 1.4 L1.6 11.6"/></svg>
<div class="abs" style="left:1159px;top:255px;width:207px;height:2.2px;background:#52638f"></div>
<div class="abs" id="grid" style="left:1159px;top:258px;width:506px;height:639.6px;overflow:hidden;background:#e1ffb8"><div class="abs" style="left:-1159px;top:-258px;width:1920px;height:1032px">
<div class="abs" style="left:1159px;top:446.9px;width:520px;height:63.60000000000002px;background:#33c867"></div>
<div class="hc" style="left:1159.2px;top:258.4px;width:125.35px;height:61.2px"></div>
<div class="hc" style="left:1284.55px;top:258.4px;width:125.65px;height:61.2px"></div>
<svg class="abs" style="left:1285.25px;top:259.09999999999997px" width="14" height="14"><path d="M0 0 H13.4 L0 13.4Z" fill="#ececec" opacity="0.85"/></svg>
<div class="hc" style="left:1410.2px;top:258.4px;width:125.55px;height:61.2px"></div>
<svg class="abs" style="left:1410.9px;top:259.09999999999997px" width="14" height="14"><path d="M0 0 H13.4 L0 13.4Z" fill="#ececec" opacity="0.85"/></svg>
<div class="hc" style="left:1535.75px;top:258.4px;width:125.35px;height:61.2px"></div>
<svg class="abs" style="left:1536.45px;top:259.09999999999997px" width="14" height="14"><path d="M0 0 H13.4 L0 13.4Z" fill="#ececec" opacity="0.85"/></svg>
<div class="hc" style="left:1661.1px;top:258.4px;width:125.35px;height:61.2px"></div>
<svg class="abs" style="left:1661.8px;top:259.09999999999997px" width="14" height="14"><path d="M0 0 H13.4 L0 13.4Z" fill="#ececec" opacity="0.85"/></svg>
<div class="ht" style="left:1287.38px;top:280.5px;width:120px">CIP<br>Pressure Control</div>
<div class="ht" style="left:1412.97px;top:280.5px;width:120px">CIP<br>Recovered Water</div>
<div class="ht" style="left:1538.42px;top:280.5px;width:120px">CIP<br>Caustic Soda</div>
<div class="hc" style="left:1159.2px;top:319.6px;width:125.35px;height:63.7px"></div>
<div class="hc" style="left:1159.2px;top:383.3px;width:125.35px;height:63.6px"></div>
<div class="hc" style="left:1159.2px;top:510.5px;width:125.35px;height:63.6px"></div>
<div class="hc" style="left:1159.2px;top:574.1px;width:125.35px;height:63.6px"></div>
<div class="hc" style="left:1159.2px;top:637.7px;width:125.35px;height:63.6px"></div>
<div class="hc" style="left:1159.2px;top:701.3px;width:125.35px;height:63.6px"></div>
<div class="hc" style="left:1159.2px;top:764.9px;width:125.35px;height:63.6px"></div>
<div class="hc" style="left:1159.2px;top:828.5px;width:125.35px;height:63.6px"></div>
<div class="hc" style="left:1159.2px;top:892.1px;width:125.35px;height:63.6px"></div>
<div class="abs" style="left:1284.55px;top:319.6px;width:125.65px;height:63.7px;background:#cfe3ea"></div>
<div class="abs" style="left:1158px;top:258px;width:1px;height:640px;background:#fcfcfc"></div>
<div class="abs" style="left:1158.95px;top:258px;width:1.2px;height:640px;background:#8a8a8a"></div>
<div class="abs" style="left:1283.25px;top:258px;width:2.4px;height:640px;background:#8f908d"></div>
<div class="abs" style="left:1409.25px;top:258px;width:1.9px;height:61.6px;background:#8a8a8a"></div>
<div class="abs" style="left:1409.25px;top:319.6px;width:1.9px;height:578.4px;background:#969b8d"></div>
<div class="abs" style="left:1534.8px;top:258px;width:1.9px;height:61.6px;background:#8a8a8a"></div>
<div class="abs" style="left:1534.8px;top:319.6px;width:1.9px;height:578.4px;background:#969b8d"></div>
<div class="abs" style="left:1660.15px;top:258px;width:1.9px;height:61.6px;background:#8a8a8a"></div>
<div class="abs" style="left:1660.15px;top:319.6px;width:1.9px;height:578.4px;background:#969b8d"></div>
<div class="abs" style="left:1159px;top:257.6px;width:521px;height:1.6px;background:#868686"></div>
<div class="abs" style="left:1159px;top:318.8px;width:521px;height:1.6px;background:#868686"></div>
<div class="abs" style="left:1159px;top:382.5px;width:125.55px;height:1.6px;background:#848484"></div>
<div class="abs" style="left:1284.55px;top:382.5px;width:395.45px;height:1.6px;background:#969b8d"></div>
<div class="abs" style="left:1159px;top:446.1px;width:125.55px;height:1.6px;background:#848484"></div>
<div class="abs" style="left:1284.55px;top:446.1px;width:395.45px;height:1.6px;background:#969b8d"></div>
<div class="abs" style="left:1159px;top:509.7px;width:125.55px;height:1.6px;background:#848484"></div>
<div class="abs" style="left:1284.55px;top:509.7px;width:395.45px;height:1.6px;background:#969b8d"></div>
<div class="abs" style="left:1159px;top:573.3px;width:125.55px;height:1.6px;background:#848484"></div>
<div class="abs" style="left:1284.55px;top:573.3px;width:395.45px;height:1.6px;background:#969b8d"></div>
<div class="abs" style="left:1159px;top:636.9px;width:125.55px;height:1.6px;background:#848484"></div>
<div class="abs" style="left:1284.55px;top:636.9px;width:395.45px;height:1.6px;background:#969b8d"></div>
<div class="abs" style="left:1159px;top:700.5px;width:125.55px;height:1.6px;background:#848484"></div>
<div class="abs" style="left:1284.55px;top:700.5px;width:395.45px;height:1.6px;background:#969b8d"></div>
<div class="abs" style="left:1159px;top:764.1px;width:125.55px;height:1.6px;background:#848484"></div>
<div class="abs" style="left:1284.55px;top:764.1px;width:395.45px;height:1.6px;background:#969b8d"></div>
<div class="abs" style="left:1159px;top:827.7px;width:125.55px;height:1.6px;background:#848484"></div>
<div class="abs" style="left:1284.55px;top:827.7px;width:395.45px;height:1.6px;background:#969b8d"></div>
<div class="abs" style="left:1159px;top:891.3px;width:125.55px;height:1.6px;background:#848484"></div>
<div class="abs" style="left:1284.55px;top:891.3px;width:395.45px;height:1.6px;background:#969b8d"></div>
<div class="abs" style="left:1159px;top:954.9px;width:125.55px;height:1.6px;background:#848484"></div>
<div class="abs" style="left:1284.55px;top:954.9px;width:395.45px;height:1.6px;background:#969b8d"></div>
<div class="abs" style="left:1159px;top:445.9px;width:520px;height:65.60000000000002px;background:rgba(51,200,103,0.42)"></div>
<div class="ht" style="left:1162px;top:343.75px;width:120px">1<br>Step</div>
<div class="ht" style="left:1162px;top:407.4px;width:120px">2<br>Step</div>
<div class="ht" style="left:1162px;top:471.0px;width:120px">3<br>Step</div>
<div class="ht" style="left:1162px;top:534.6px;width:120px">4<br>Step</div>
<div class="ht" style="left:1162px;top:598.2px;width:120px">5<br>Step</div>
<div class="ht" style="left:1162px;top:661.8px;width:120px">6<br>Step</div>
<div class="ht" style="left:1162px;top:725.4px;width:120px">7<br>Step</div>
<div class="ht" style="left:1162px;top:789.0px;width:120px">8<br>Step</div>
<div class="ht" style="left:1162px;top:852.6px;width:120px">9<br>Step</div>
<div class="ht" style="left:1162px;top:916.2px;width:120px">10<br>Step</div>
<div class="abs" style="left:1290.15px;top:324.9px;width:115.2px;height:52.9px;box-sizing:border-box;border:2.4px solid #000;background:radial-gradient(ellipse 66% 66% at 50% 50%,#fdfef4 0%,#f0f7d2 20%,#c8df72 55%,#a2c930 84%,#90bc1c 100%)"></div>
<div class="ic" style="left:1307.38px;top:347.95px;width:80px;color:#333">Active</div>
<svg class="abs" style="left:1285.95px;top:320.8px" width="19" height="19" viewBox="0 0 19 19"><circle cx="9.4" cy="9.2" r="8" fill="#fff" stroke="#9a9a9a" stroke-width="1"/><path d="M7 4.6 L13.4 9.2 L7 13.8Z" fill="#108a24"/></svg>
<div class="ic" style="left:1432.97px;top:347.95px;width:80px">Inactive</div>
<div class="ic" style="left:1558.42px;top:347.95px;width:80px">Inactive</div>
<div class="ic" style="left:1307.38px;top:412.2px;width:80px">Inactive</div>
<div class="abs" style="left:1415.8px;top:388.0px;width:115.2px;height:52.9px;box-sizing:border-box;border:1.2px solid #17566c;background:radial-gradient(ellipse 66% 66% at 50% 50%,#f6fbfc 0%,#d6e8ed 20%,#7fb6c6 55%,#3f8ca2 84%,#2d7d93 100%)"></div>
<div class="ic" style="left:1432.97px;top:412.2px;width:80px;color:#333">Active</div>
<div class="ic" style="left:1558.42px;top:412.2px;width:80px">Inactive</div>
<div class="ic" style="left:1307.38px;top:474.9px;width:80px">Inactive</div>
<div class="ic" style="left:1432.97px;top:474.9px;width:80px">Inactive</div>
<div class="abs" style="left:1541.35px;top:452.2px;width:115.2px;height:52.9px;box-sizing:border-box;border:1px solid #1f3a00;background:radial-gradient(ellipse 66% 66% at 50% 50%,#fdfef4 0%,#f0f7d2 20%,#c8df72 55%,#a2c930 84%,#90bc1c 100%)"></div>
<div class="ic" style="left:1558.42px;top:474.9px;width:80px;color:#333">Active</div>
<svg class="abs" style="left:1537.15px;top:448.1px" width="19" height="19" viewBox="0 0 19 19"><circle cx="9.4" cy="9.2" r="8" fill="#fff" stroke="#9a9a9a" stroke-width="1"/><path d="M7 4.6 L13.4 9.2 L7 13.8Z" fill="#108a24"/></svg>
<div class="ic" style="left:1307.38px;top:538.8px;width:80px">Inactive</div>
<div class="ic" style="left:1432.97px;top:538.8px;width:80px">Inactive</div>
<div class="ic" style="left:1558.42px;top:538.8px;width:80px">Inactive</div>
<div class="ic" style="left:1307.38px;top:602.4px;width:80px">Inactive</div>
<div class="ic" style="left:1432.97px;top:602.4px;width:80px">Inactive</div>
<div class="ic" style="left:1558.42px;top:602.4px;width:80px">Inactive</div>
<div class="ic" style="left:1307.38px;top:666.0px;width:80px">Inactive</div>
<div class="ic" style="left:1432.97px;top:666.0px;width:80px">Inactive</div>
<div class="ic" style="left:1558.42px;top:666.0px;width:80px">Inactive</div>
<div class="ic" style="left:1307.38px;top:730.2px;width:80px">Inactive</div>
<div class="ic" style="left:1432.97px;top:730.2px;width:80px">Inactive</div>
<div class="ic" style="left:1558.42px;top:730.2px;width:80px">Inactive</div>
<div class="ic" style="left:1307.38px;top:792.9px;width:80px">Inactive</div>
<div class="ic" style="left:1432.97px;top:792.9px;width:80px">Inactive</div>
<div class="ic" style="left:1558.42px;top:792.9px;width:80px">Inactive</div>
<div class="ic" style="left:1307.38px;top:857.4px;width:80px">Inactive</div>
<div class="ic" style="left:1432.97px;top:857.4px;width:80px">Inactive</div>
<div class="ic" style="left:1558.42px;top:857.4px;width:80px">Inactive</div>
<div class="ic" style="left:1307.38px;top:920.1px;width:80px">Inactive</div>
<div class="ic" style="left:1432.97px;top:920.1px;width:80px">Inactive</div>
<div class="ic" style="left:1558.42px;top:920.1px;width:80px">Inactive</div>
</div></div>
<div class="abs" style="left:1665px;top:258px;width:12.6px;height:639.6px;background:#fcfcfc"></div>
<svg class="abs" style="left:1665px;top:258px" width="13" height="640" viewBox="0 0 13 640"><path d="M6.3 7 L10.2 12.4 H2.4Z" fill="#8c8c8c"/><rect x="2.5" y="19.6" width="7.6" height="503" rx="3.8" fill="#8c8c8c"/><path d="M6.3 632.4 L10.2 627 H2.4Z" fill="#8c8c8c"/></svg>
<div class="abs" style="left:1159px;top:897.6px;width:518.6px;height:12.8px;background:#fcfcfc;border-bottom:1px solid #e6e6e6;border-left:1px solid #e6e6e6;box-sizing:border-box"></div>
<svg class="abs" style="left:1159px;top:897.6px" width="519" height="13" viewBox="0 0 519 13"><path d="M6.8 6.2 L13.4 2.4 V10.2Z" fill="#8c8c8c"/><rect x="20.4" y="2.3" width="170.6" height="7.8" rx="3.9" fill="#8c8c8c"/><path d="M499 6.2 L492.4 2.4 V10.2Z" fill="#8c8c8c"/></svg>
<!-- bottom bar -->
<div class="abs" style="left:0;top:940px;width:1138px;height:92px;background:#d6dce8"></div>
<div class="abs" style="left:1138px;top:942px;width:562px;height:90px;background:#d6dce8"></div>
<svg class="abs" style="left:251px;top:969px" width="32" height="32" viewBox="0 0 32 32">
  <defs><clipPath id="uc"><circle cx="16" cy="15.6" r="12.4"/></clipPath></defs>
  <circle cx="16" cy="15.6" r="12.9" fill="none" stroke="#62789c" stroke-width="2.2"/>
  <circle cx="16" cy="11" r="5.7" fill="#62789c"/>
  <ellipse cx="16" cy="26.6" rx="9.4" ry="8.8" fill="#62789c" clip-path="url(#uc)"/>
  <circle cx="24.6" cy="26.4" r="3.9" fill="#d6dce8"/>
  <circle cx="24.6" cy="26.4" r="3.1" fill="#55d42a"/>
</svg>
<div class="t" style="left:296.6px;top:977px;font-size:14.5px;font-weight:bold;color:#3d3d3d">Brewmaster</div>
<!-- alarm list -->
<div class="abs" style="left:567.5px;top:949px;width:1018.5px;height:70.8px;background:#e6eaee"></div>
<div class="abs" style="left:567.5px;top:949px;width:725.5px;height:21.8px;background:#e0e4ea"></div>
<div class="abs" style="left:1293px;top:949px;width:293px;height:21.8px;background:#fff"></div>
<div class="abs" style="left:567.5px;top:948.2px;width:1018.5px;height:1.3px;background:#959595"></div>
<div class="abs" style="left:567px;top:949px;width:1.4px;height:70.8px;background:#a6a6a6"></div>
<div class="abs" style="left:630px;top:950px;width:1px;height:21.5px;background:#c9ced8"></div>
<div class="abs" style="left:772px;top:950px;width:1px;height:21.5px;background:#c9ced8"></div>
<div class="abs" style="left:915px;top:950px;width:1px;height:21.5px;background:#c9ced8"></div>
<div class="abs" style="left:1071px;top:950px;width:1px;height:21.5px;background:#c9ced8"></div>
<div class="t" style="left:573px;top:954.6px;font-size:12.3px;font-weight:bold;color:#222;letter-spacing:-0.5px">Class</div>
<div class="t" style="left:636px;top:954.6px;font-size:12.3px;font-weight:bold;color:#222">Time received</div>
<svg class="abs" style="left:724px;top:954.6px" width="11" height="12" viewBox="0 0 11 12" fill="none" stroke="#222" stroke-width="1.8"><path d="M5.5 10.6 V2 M1.4 6 L5.5 1.8 L9.6 6"/></svg>
<div class="t" style="left:778.4px;top:954.6px;font-size:12.3px;font-weight:bold;color:#222">Time cleared</div>
<div class="t" style="left:921px;top:954.6px;font-size:12.3px;font-weight:bold;color:#222">Identification</div>
<div class="t" style="left:1076.6px;top:954.6px;font-size:12.3px;font-weight:bold;color:#222">Text</div>
<!-- gear -->
<svg class="abs" style="left:1638px;top:968.9px" width="28" height="28" viewBox="-14 -14 28 28">
  <g fill="#f2f2f2">
    <rect x="-2.05" y="-12.5" width="4.1" height="25" rx="0.7"/>
    <rect x="-2.05" y="-12.5" width="4.1" height="25" rx="0.7" transform="rotate(45)"/>
    <rect x="-2.05" y="-12.5" width="4.1" height="25" rx="0.7" transform="rotate(90)"/>
    <rect x="-2.05" y="-12.5" width="4.1" height="25" rx="0.7" transform="rotate(135)"/>
    <circle r="9.4"/>
  </g>
  <circle r="4.3" fill="#d6dce8"/>
</svg>
</div></div>
</body>
</html>
